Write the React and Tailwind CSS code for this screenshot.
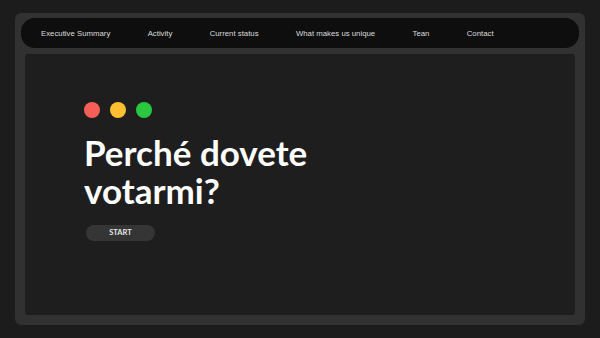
import React from 'react';

const links = ['Executive Summary', 'Activity', 'Current status', 'What makes us unique', 'Tean', 'Contact'];

export default function App() {
    return (
        <div className="w-[600px] h-[338px] bg-[#1c1c1c] pt-[13px] px-[15px]">
            <div className="h-[312px] bg-[#313131] rounded-md pt-[5px] px-[6px] pb-[10px] flex flex-col gap-[6px]">
                <nav className="h-[30px] shrink-0 bg-[#0e0e0e] rounded-[14px] flex items-center pl-[20px] pt-[1px] gap-[37.3px] font-['Liberation_Sans',Arial,sans-serif] text-[7.8px] text-[#dcdcdc]">
                    {links.map((l) => (
                        <span key={l}>{l}</span>
                    ))}
                </nav>
                <main className="flex-1 mx-[4px] bg-[#1e1e1e] rounded-[3px] pt-[48px] pl-[59px] font-['Lato',sans-serif]">
                    <div className="flex gap-[10px]">
                        <span className="w-4 h-4 rounded-full bg-[#f65f58]" />
                        <span className="w-4 h-4 rounded-full bg-[#fbbf2f]" />
                        <span className="w-4 h-4 rounded-full bg-[#29c840]" />
                    </div>
                    <h1 className="mt-[15px] text-[35px] leading-[38px] font-bold text-white">
                        Perché dovete<br />votarmi?
                    </h1>
                    <button className="mt-[16px] ml-[2px] w-[69px] h-[16px] rounded-full bg-[#353535] text-[7.5px] font-bold text-[#e8e8e8] flex items-center justify-center">
                        START
                    </button>
                </main>
            </div>
        </div>
    );
}
